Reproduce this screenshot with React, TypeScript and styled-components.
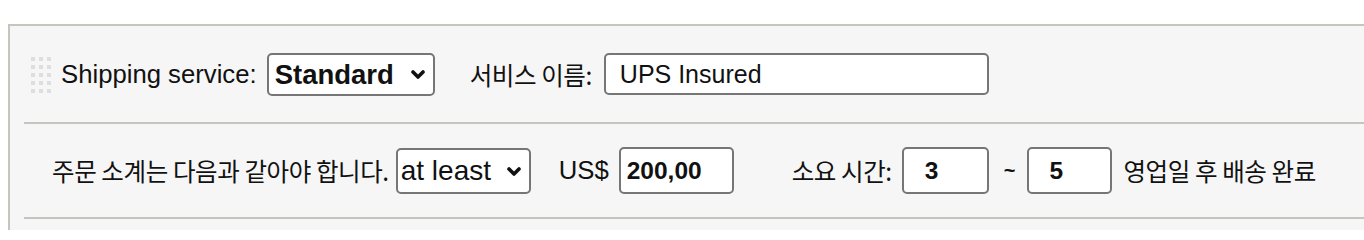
import React from 'react';
import styled, { createGlobalStyle } from 'styled-components';

const GlobalStyle = createGlobalStyle`
  html, body {
    margin: 0;
    padding: 0;
    background: #ffffff;
  }
  body {
    font-family: 'Liberation Sans', Helvetica, Arial, 'Noto Sans CJK KR', sans-serif;
    color: #111111;
  }
`;

const colors = {
  border: '#c5c5bf',
  panel: '#f6f6f6',
  field: '#767676',
  text: '#111111',
};

const Page = styled.div`
  padding: 24px 0 0 8px;
`;

const Panel = styled.div`
  background: ${colors.panel};
  border-top: 2px solid ${colors.border};
  border-left: 2px solid ${colors.border};
  padding-left: 14px;
  height: 204px;
`;

const Row = styled.div<{ $indent: number; $height: number }>`
  display: flex;
  align-items: center;
  height: ${(p) => p.$height}px;
  padding-left: ${(p) => p.$indent}px;
  border-bottom: 2px solid ${colors.border};
`;

const Handle = styled.div`
  display: grid;
  grid-template-columns: repeat(3, 4px);
  grid-auto-rows: 4px;
  gap: 4px;
  margin-right: 10px;
  padding-top: 2px;
`;

const Dot = styled.span`
  background: #dedede;
`;

const Label = styled.span<{ $gap?: number; $after?: number }>`
  font-size: 25.7px;
  white-space: nowrap;
  margin-right: ${(p) => p.$gap ?? 10}px;
  margin-left: ${(p) => p.$after ?? 0}px;
`;

const Korean = styled(Label)`
  font-family: 'Noto Sans CJK KR', sans-serif;
  font-size: 24.5px;
  letter-spacing: -0.4px;
`;

const SelectWrap = styled.div<{ $width: number }>`
  position: relative;
  width: ${(p) => p.$width}px;
`;

const Select = styled.select<{ $bold?: boolean }>`
  appearance: none;
  -webkit-appearance: none;
  display: block;
  width: 100%;
  height: ${(p) => (p.$bold ? 43 : 46)}px;
  box-sizing: border-box;
  border: 2px solid ${colors.field};
  border-radius: 5px;
  background: #ffffff;
  color: ${colors.text};
  font-family: 'Liberation Sans', Helvetica, Arial, sans-serif;
  font-size: ${(p) => (p.$bold ? 27.5 : 28)}px;
  font-weight: ${(p) => (p.$bold ? 700 : 400)};
  padding: 0 0 0 ${(p) => (p.$bold ? 6 : 3)}px;
  margin: 0;
`;

const Chevron = styled.svg`
  position: absolute;
  right: 10px;
  top: 50%;
  width: 14px;
  height: 10px;
  margin-top: -4px;
  pointer-events: none;
`;

const Input = styled.input<{ $width: number; $bold?: boolean; $pad: number }>`
  width: ${(p) => p.$width}px;
  height: ${(p) => (p.$bold ? 47 : 42)}px;
  box-sizing: border-box;
  border: 2px solid ${colors.field};
  border-radius: 5px;
  background: #ffffff;
  color: ${colors.text};
  font-family: 'Liberation Sans', Helvetica, Arial, sans-serif;
  font-size: ${(p) => (p.$bold ? 24.5 : 25)}px;
  font-weight: ${(p) => (p.$bold ? 700 : 400)};
  padding: 0 0 0 ${(p) => p.$pad}px;
  margin: 0;
  outline: none;
`;

const Tilde = styled.span`
  font-size: 20px;
  font-weight: 700;
  margin: 0 12px 0 15px;
`;

const ArrowDown = () => (
  <Chevron viewBox="0 0 14 10">
    <path d="M2 2 L7 7 L12 2" fill="none" stroke="#111" strokeWidth="3.6" strokeLinecap="round" strokeLinejoin="round" />
  </Chevron>
);

const Dropdown = ({ width, value, options, bold }: { width: number; value: string; options: string[]; bold?: boolean }) => (
  <SelectWrap $width={width}>
    <Select $bold={bold} defaultValue={value}>
      {options.map((o) => (
        <option key={o}>{o}</option>
      ))}
    </Select>
    <ArrowDown />
  </SelectWrap>
);

export default function App() {
  return (
    <Page>
      <GlobalStyle />
      <Panel>
        <Row $indent={7} $height={96}>
          <Handle>
            {Array.from({ length: 15 }).map((_, i) => (
              <Dot key={i} />
            ))}
          </Handle>
          <Label>Shipping service:</Label>
          <Dropdown width={168} value="Standard" options={['Standard', 'Express', 'Overnight']} bold />
          <Korean $after={35} $gap={12}>
            서비스 이름:
          </Korean>
          <Input $width={385} $pad={14} defaultValue="UPS Insured" />
        </Row>
        <Row $indent={28} $height={93}>
          <Korean $gap={7}>주문 소계는 다음과 같아야 합니다.</Korean>
          <Dropdown width={135} value="at least" options={['at least', 'at most']} />
          <Label $after={28} $gap={10}>
            US$
          </Label>
          <Input $width={115} $pad={6} $bold defaultValue="200,00" />
          <Korean $after={58} $gap={10}>
            소요 시간:
          </Korean>
          <Input $width={87} $pad={21} $bold defaultValue="3" />
          <Tilde>~</Tilde>
          <Input $width={85} $pad={20} $bold defaultValue="5" />
          <Korean $after={11} $gap={0}>
            영업일 후 배송 완료
          </Korean>
        </Row>
      </Panel>
    </Page>
  );
}
